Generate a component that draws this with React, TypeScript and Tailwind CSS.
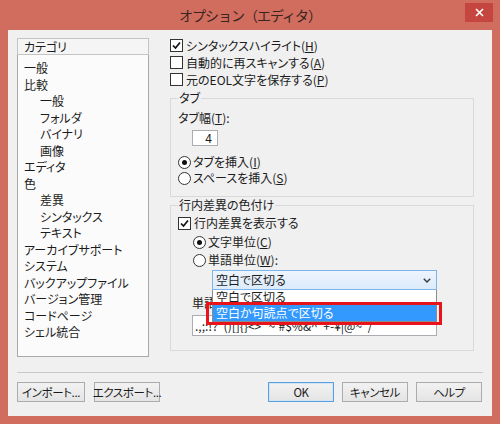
import React from "react";

const categories: [string, boolean][] = [
  ["一般", false],
  ["比較", false],
  ["一般", true],
  ["フォルダ", true],
  ["バイナリ", true],
  ["画像", true],
  ["エディタ", false],
  ["色", false],
  ["差異", true],
  ["シンタックス", true],
  ["テキスト", true],
  ["アーカイブサポート", false],
  ["システム", false],
  ["バックアップファイル", false],
  ["バージョン管理", false],
  ["コードページ", false],
  ["シェル統合", false],
];

function CheckBox({ checked }: { checked?: boolean }) {
  return (
    <span className="w-[13px] h-[13px] border border-[#333333] bg-white flex items-center justify-center shrink-0">
      {checked && (
        <svg width="11" height="11" viewBox="0 0 11 11">
          <path d="M2 5.5 L4.5 8 L9 2.5" fill="none" stroke="#111" strokeWidth="1.7" />
        </svg>
      )}
    </span>
  );
}

function Radio({ checked }: { checked?: boolean }) {
  return (
    <span className="w-[13px] h-[13px] rounded-full border border-[#333333] bg-white flex items-center justify-center shrink-0">
      {checked && <span className="w-[5px] h-[5px] rounded-full bg-[#111]" />}
    </span>
  );
}

function Btn({ children, primary, w }: { children: React.ReactNode; primary?: boolean; w: string }) {
  return (
    <button
      className={
        "h-[20px] flex items-center justify-center whitespace-nowrap text-[11.5px] tracking-[-0.4px] bg-gradient-to-b from-[#f2f2f2] to-[#e4e4e4] border " +
        w +
        (primary ? " border-[#5e9fdc] shadow-[inset_0_0_0_1px_#cfe4f7]" : " border-[#acacac]")
      }
    >
      {children}
    </button>
  );
}

export default function App() {
  return (
    <div className="w-[500px] h-[424px] bg-[#d06d5e] flex flex-col font-['Noto_Sans_CJK_JP',sans-serif] text-[12px] leading-[16px] text-[#1b1b1b] [font-feature-settings:'palt']">
      {/* Title bar */}
      <div className="relative h-[30px] flex items-center justify-center">
        <span className="text-[14px] text-[#3a2420] [font-feature-settings:normal] tracking-[-1px]">オプション（エディタ）</span>
        <button className="absolute right-[7px] top-[3px] w-[28px] h-[19px] bg-[#c4463f] flex items-center justify-center">
          <svg width="9" height="9" viewBox="0 0 9 9">
            <path d="M1 1 L8 8 M8 1 L1 8" stroke="#fff" strokeWidth="1.6" />
          </svg>
        </button>
      </div>

      {/* Client area */}
      <div className="mx-[8px] h-[386px] bg-[#f0f0f0] flex flex-col px-[9px] pt-[8px]">
        <div className="flex h-[319px]">
          {/* Category list */}
          <div className="w-[132px] flex flex-col">
            <div className="h-[17px] border border-[#c4c4c4] bg-[#f5f5f5] flex items-center pl-[6px]">カテゴリ</div>
            <div className="flex-1 border border-t-0 border-[#a9a9a9] bg-[#fbfbfb] pt-[5px]">
              {categories.map(([label, sub], i) => (
                <div key={i} className={"h-[16.5px] flex items-center " + (sub ? "pl-[22px]" : "pl-[6px]")}>
                  {label}
                </div>
              ))}
            </div>
          </div>

          {/* Editor options */}
          <div className="ml-[21px] w-[304px] -mt-px flex flex-col">
            <div className="h-[17px] flex items-center gap-[3px]">
              <CheckBox checked />
              <span>シンタックスハイライト(<u>H</u>)</span>
            </div>
            <div className="h-[17px] flex items-center gap-[3px]">
              <CheckBox />
              <span>自動的に再スキャンする(<u>A</u>)</span>
            </div>
            <div className="h-[17px] flex items-center gap-[3px]">
              <CheckBox />
              <span>元のEOL文字を保存する(<u>P</u>)</span>
            </div>

            <fieldset className="mt-[2px] border border-[#d9d9d9] px-[7px] pb-[10px]">
              <legend className="px-[1px]">タブ</legend>
              <div className="mt-[4px] h-[16px] flex items-center">
                タブ幅(<u>T</u>):
              </div>
              <div className="mt-[4px] ml-[14px] w-[26px] h-[16px] border border-[#abadb3] bg-white flex items-center justify-end pr-[5px]">
                4
              </div>
              <div className="mt-[8px] h-[16px] flex items-center gap-[2px]">
                <Radio checked />
                <span>タブを挿入(<u>I</u>)</span>
              </div>
              <div className="h-[16px] flex items-center gap-[2px]">
                <Radio />
                <span>スペースを挿入(<u>S</u>)</span>
              </div>
            </fieldset>

            <fieldset className="border border-[#d9d9d9] px-[7px] pb-[14px]">
              <legend className="px-[1px]">行内差異の色付け</legend>
              <div className="mt-[2px] h-[16px] flex items-center gap-[3px]">
                <CheckBox checked />
                <span>行内差異を表示する</span>
              </div>
              <div className="mt-[3px] ml-[15px] h-[16px] flex items-center gap-[2px]">
                <Radio checked />
                <span>文字単位(<u>C</u>)</span>
              </div>
              <div className="mt-[2px] ml-[15px] h-[16px] flex items-center gap-[2px]">
                <Radio />
                <span>単語単位(<u>W</u>):</span>
              </div>

              {/* Combobox with open drop-down */}
              <div className="relative mt-[2px] ml-[34px] w-[225px] h-[20px] border border-[#7eb4ea] bg-gradient-to-b from-[#edf5fd] to-[#dcebfb] flex items-center justify-between pl-[3px] pr-[5px]">
                <span>空白で区切る</span>
                <svg width="8" height="5" viewBox="0 0 8 5">
                  <path d="M0.8 0.8 L4 4 L7.2 0.8" fill="none" stroke="#404040" strokeWidth="1.5" />
                </svg>
                <div className="absolute z-10 left-[-1px] top-[19px] w-[225px] border border-t-0 border-[#8c8c8c] bg-white">
                  <div className="h-[16px] flex items-center pl-[3px] -mt-[1px]">空白で区切る</div>
                  <div className="h-[16px] flex items-center pl-[3px] bg-[#3399ff] text-white">空白か句読点で区切る</div>
                </div>
                <div className="absolute z-20 left-[-7px] top-[31px] w-[236px] h-[23px] border-[3px] border-[#e8141c]" />
              </div>

              <div className="mt-[5px] ml-[14px] h-[16px] flex items-center">
                単語区切り文字(<u>B</u>):
              </div>
              <div className="mt-[4px] ml-[14px] w-[245px] h-[21px] border border-[#abadb3] bg-white flex items-center pl-[2px] whitespace-nowrap overflow-hidden">
                {".,;:!?\"()[]{}<>`~'#$%&^*+-¥|@~*/"}
              </div>
            </fieldset>
          </div>
        </div>

        <div className="mt-[15px] h-px bg-[#c9c9c9]" />

        <div className="mt-[9px] flex items-center">
          <Btn w="w-[68px]">インポート...</Btn>
          <div className="ml-[9px]">
            <Btn w="w-[66px]">エクスポート...</Btn>
          </div>
          <div className="ml-auto flex gap-[8px] pr-px">
            <Btn w="w-[66px]" primary>
              OK
            </Btn>
            <Btn w="w-[66px]">キャンセル</Btn>
            <Btn w="w-[66px]">ヘルプ</Btn>
          </div>
        </div>
      </div>
    </div>
  );
}
